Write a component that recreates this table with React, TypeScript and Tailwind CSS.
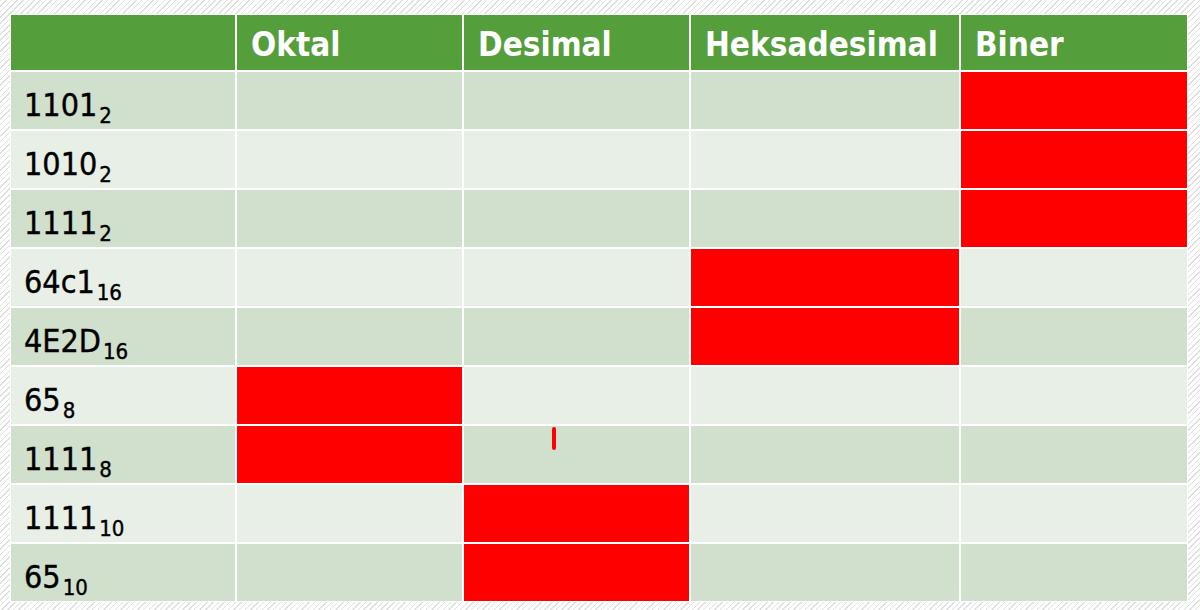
const columns = ['', 'Oktal', 'Desimal', 'Heksadesimal', 'Biner']

type Row = { value: string; base: string; red: number }

const rows: Row[] = [
  { value: '1101', base: '2', red: 4 },
  { value: '1010', base: '2', red: 4 },
  { value: '1111', base: '2', red: 4 },
  { value: '64c1', base: '16', red: 3 },
  { value: '4E2D', base: '16', red: 3 },
  { value: '65', base: '8', red: 1 },
  { value: '1111', base: '8', red: 1 },
  { value: '1111', base: '10', red: 2 },
  { value: '65', base: '10', red: 2 },
]

const font = { fontFamily: '"DejaVu Sans Condensed", "DejaVu Sans", sans-serif', fontStretch: 'condensed' }

export default function App() {
  return (
    <div className="w-[1200px] h-[610px] bg-white bg-[repeating-linear-gradient(135deg,#dedede_0px,#dedede_1px,#ffffff_1px,#ffffff_4px)] pl-[10px] pt-[14px]" style={font}>
      <div className="w-[1178px] bg-white p-px grid grid-cols-[224px_225px_225px_268px_226px] gap-[2px]">
        {columns.map((c, i) => (
          <div key={i} className="h-[55px] bg-[#559e3c] pl-[14px] pt-[13px] text-[33px] leading-[33px] font-bold text-white">
            {c}
          </div>
        ))}
        {rows.map((r, ri) => {
          const bg = ri % 2 === 0 ? 'bg-[#d1dfcd]' : 'bg-[#e8efe6]'
          return [0, 1, 2, 3, 4].map((ci) => {
            if (ci === 0) {
              return (
                <div key={ri + '-' + ci} className={`h-[57px] ${bg} pl-[13px] pt-[17px] text-[32px] leading-[32px] text-black [-webkit-text-stroke:0.4px_#000]`}>
                  {r.value}
                  <sub className="text-[22px] bottom-[-7px] ml-[2px]">{r.base}</sub>
                </div>
              )
            }
            return (
              <div key={ri + '-' + ci} className={`relative h-[57px] ${ci === r.red ? 'bg-[#ff0000]' : bg}`}>
                {ri === 6 && ci === 2 && (
                  <span className="absolute left-[88px] top-px w-[4px] h-[23px] rounded-full bg-[#ff0000]" />
                )}
              </div>
            )
          })
        })}
      </div>
    </div>
  )
}
